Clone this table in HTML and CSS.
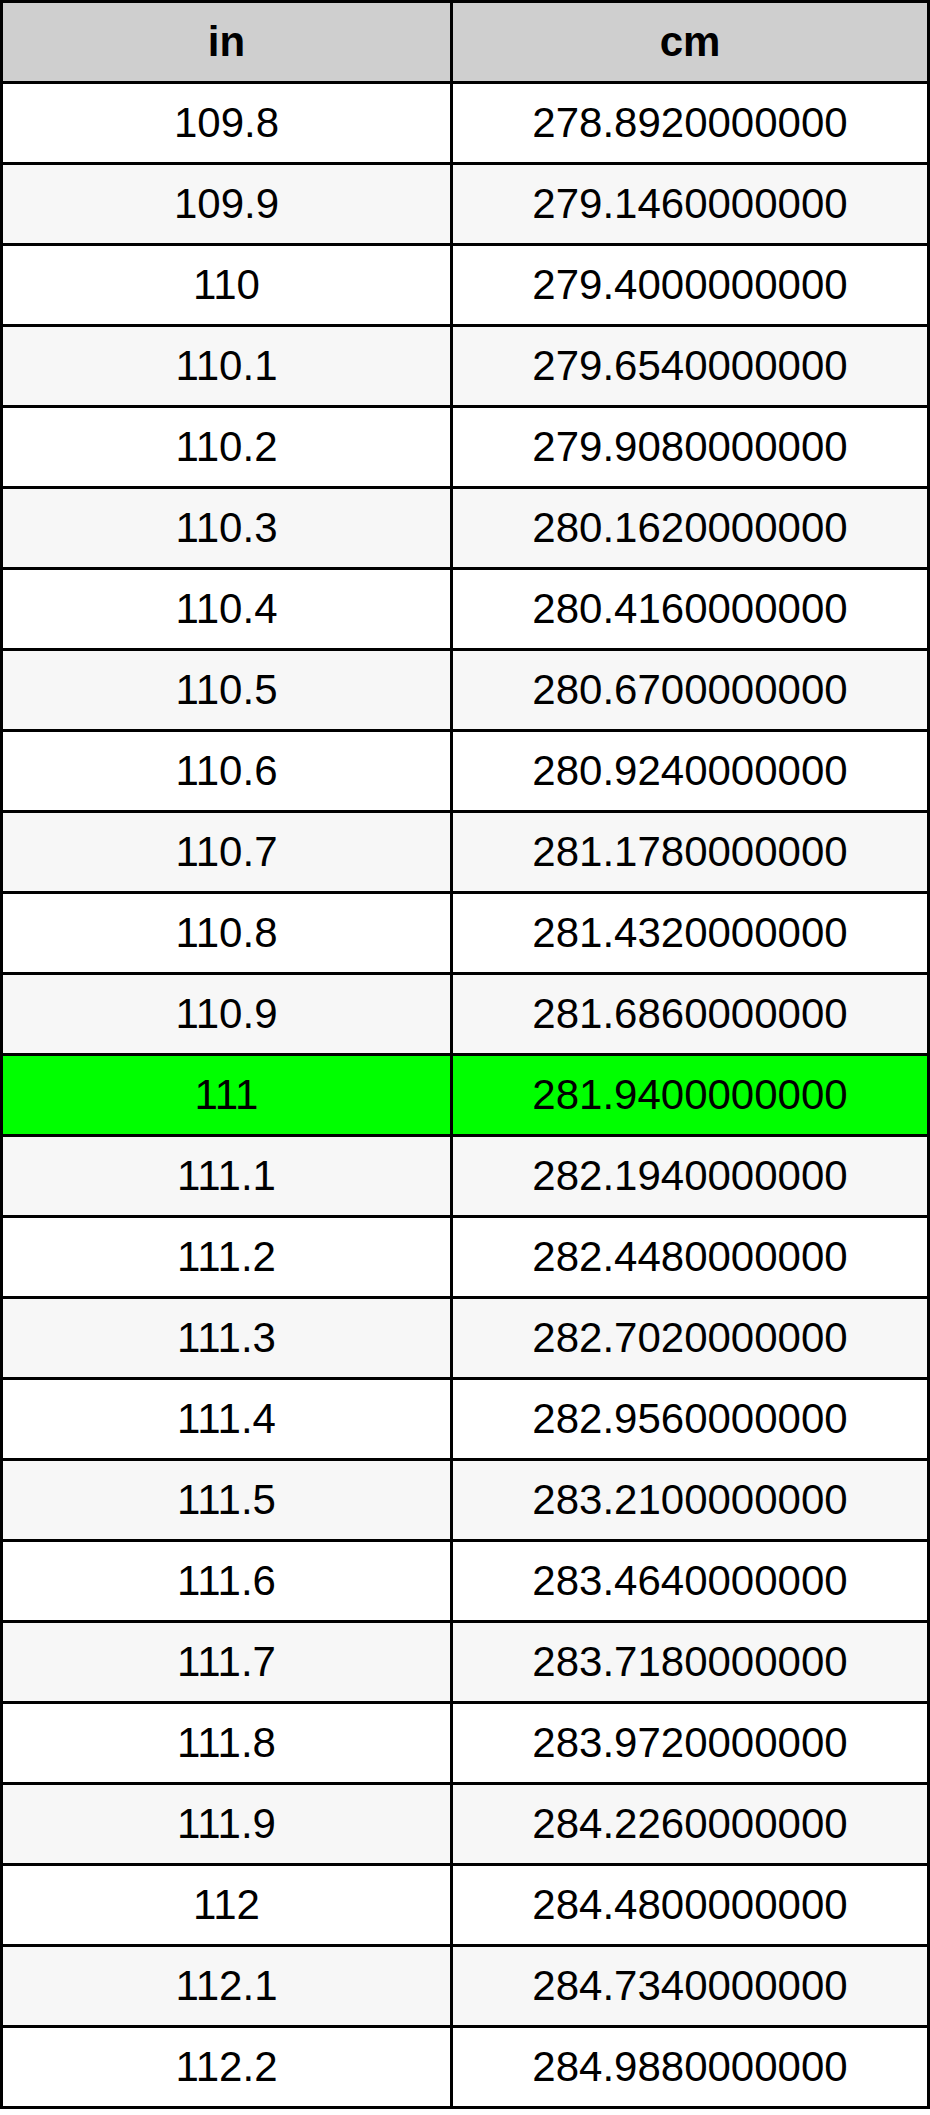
FILE: index.html
```html
<!DOCTYPE html>
<html lang="en">
<head>
<meta charset="utf-8">
<title>in to cm</title>
<link rel="stylesheet" href="styles.css">
</head>
<body>
<div class="table" role="table">
  <div class="cell head" role="columnheader">in</div><div class="cell head" role="columnheader">cm</div>
  <div class="cell odd">109.8</div><div class="cell odd">278.8920000000</div>
  <div class="cell even">109.9</div><div class="cell even">279.1460000000</div>
  <div class="cell odd">110</div><div class="cell odd">279.4000000000</div>
  <div class="cell even">110.1</div><div class="cell even">279.6540000000</div>
  <div class="cell odd">110.2</div><div class="cell odd">279.9080000000</div>
  <div class="cell even">110.3</div><div class="cell even">280.1620000000</div>
  <div class="cell odd">110.4</div><div class="cell odd">280.4160000000</div>
  <div class="cell even">110.5</div><div class="cell even">280.6700000000</div>
  <div class="cell odd">110.6</div><div class="cell odd">280.9240000000</div>
  <div class="cell even">110.7</div><div class="cell even">281.1780000000</div>
  <div class="cell odd">110.8</div><div class="cell odd">281.4320000000</div>
  <div class="cell even">110.9</div><div class="cell even">281.6860000000</div>
  <div class="cell hl">111</div><div class="cell hl">281.9400000000</div>
  <div class="cell even">111.1</div><div class="cell even">282.1940000000</div>
  <div class="cell odd">111.2</div><div class="cell odd">282.4480000000</div>
  <div class="cell even">111.3</div><div class="cell even">282.7020000000</div>
  <div class="cell odd">111.4</div><div class="cell odd">282.9560000000</div>
  <div class="cell even">111.5</div><div class="cell even">283.2100000000</div>
  <div class="cell odd">111.6</div><div class="cell odd">283.4640000000</div>
  <div class="cell even">111.7</div><div class="cell even">283.7180000000</div>
  <div class="cell odd">111.8</div><div class="cell odd">283.9720000000</div>
  <div class="cell even">111.9</div><div class="cell even">284.2260000000</div>
  <div class="cell odd">112</div><div class="cell odd">284.4800000000</div>
  <div class="cell even">112.1</div><div class="cell even">284.7340000000</div>
  <div class="cell odd">112.2</div><div class="cell odd">284.9880000000</div>
</div>
</body>
</html>
```
FILE: styles.css
```css
html, body {
  margin: 0;
  padding: 0;
  background: #ffffff;
}
.table {
  display: grid;
  grid-template-columns: 447px 474px;
  grid-auto-rows: 78px;
  gap: 3px;
  padding: 3px;
  width: 930px;
  box-sizing: border-box;
  background: #000000;
  font-family: "Liberation Sans", Arial, sans-serif;
  font-size: 42px;
  color: #000000;
}
.cell {
  display: flex;
  align-items: center;
  justify-content: center;
  line-height: 1;
}
.head {
  background: #cfcfcf;
  font-weight: bold;
}
.odd {
  background: #ffffff;
}
.even {
  background: #f7f7f7;
}
.hl {
  background: #00ff00;
}
```
